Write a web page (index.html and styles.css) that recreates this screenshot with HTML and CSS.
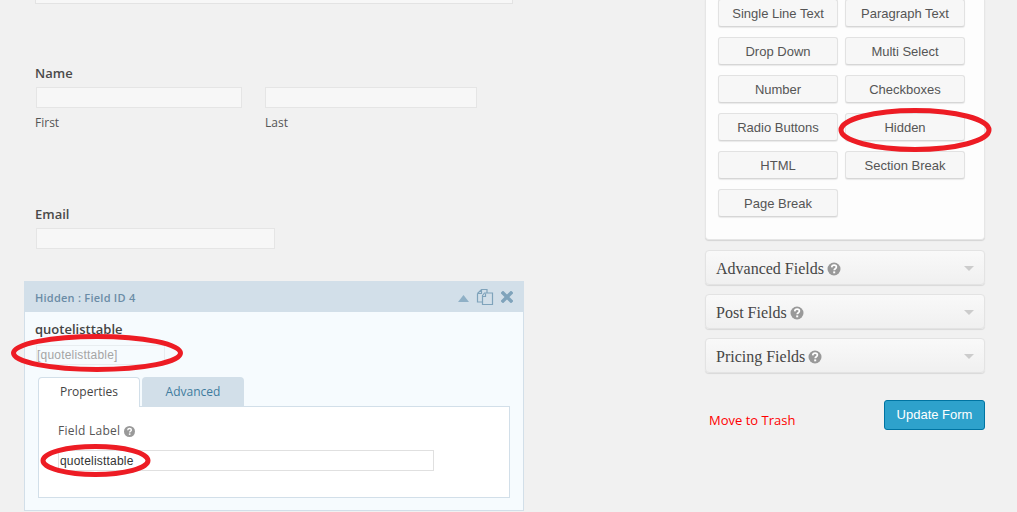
FILE: index.html
```html
<!DOCTYPE html>
<html lang="en">
<head>
<meta charset="utf-8">
<title>Form editor</title>
<link rel="stylesheet" href="styles.css">
</head>
<body>
<main class="page">
  <section class="editor">
    <div class="top-box"></div>
    <div class="field field-name">
      <div class="field-title">Name</div>
      <div class="name-row">
        <div class="name-first"><div class="input input-first"></div><div class="sub">First</div></div>
        <div class="name-last"><div class="input input-last"></div><div class="sub">Last</div></div>
      </div>
    </div>
    <div class="field field-email">
      <div class="field-title">Email</div>
      <div class="input input-email"></div>
    </div>
    <div class="card">
      <div class="card-head">
        <span class="card-type">Hidden : Field ID 4</span>
        <div class="card-tools">
          <svg class="ic-up" width="11" height="7" viewBox="0 0 11 7"><path d="M5.5 0 11 7H0z" fill="#8fb0c6"/></svg>
          <svg class="ic-copy" width="18" height="18" viewBox="0 0 18 18"><path d="M1.500 5.500 5.500 1.500H11V5M1.500 5.500V14H6M1.500 5.500H5.500V1.500" fill="none" stroke="#7fa3bb" stroke-width="1.200"/><path d="M6.500 7.500 8.500 5H16.500V16.500H6.500Z" fill="#d2dfe9" stroke="#7fa3bb" stroke-width="1.200"/><path d="M6.500 8.500H9.500V5.500" fill="none" stroke="#7fa3bb" stroke-width="1.200"/></svg>
          <svg class="ic-x" width="12" height="12" viewBox="0 0 12 12"><path d="M2 2 10 10M10 2 2 10" stroke="#7fa3bb" stroke-width="3.400" stroke-linecap="square"/></svg>
        </div>
      </div>
      <div class="card-body">
        <div class="card-label">quotelisttable</div>
        <div class="shortcode">[quotelisttable]</div>
        <div class="tabs">
          <div class="tab tab-active">Properties</div>
          <div class="tab">Advanced</div>
        </div>
        <div class="tab-panel">
          <div class="prop-label">Field Label
            <svg class="help help-small" width="11" height="11" viewBox="0 0 14 14"><circle cx="7" cy="7" r="7" fill="#999"/><path d="M4.700 5.400C4.800 3.900 5.800 3.200 7.100 3.200 8.500 3.200 9.400 4 9.400 5.100 9.400 6.700 7.200 6.700 7.200 8.300" fill="none" stroke="#fff" stroke-width="1.700"/><rect x="6.200" y="9.400" width="2" height="1.900" fill="#fff"/></svg>
          </div>
          <div class="label-input">quotelisttable</div>
        </div>
      </div>
    </div>
  </section>

  <aside class="sidebar">
    <div class="std-panel">
      <div class="btn-grid">
        <div class="fbtn">Single Line Text</div>
        <div class="fbtn">Paragraph Text</div>
        <div class="fbtn">Drop Down</div>
        <div class="fbtn">Multi Select</div>
        <div class="fbtn">Number</div>
        <div class="fbtn">Checkboxes</div>
        <div class="fbtn">Radio Buttons</div>
        <div class="fbtn">Hidden</div>
        <div class="fbtn">HTML</div>
        <div class="fbtn">Section Break</div>
        <div class="fbtn">Page Break</div>
      </div>
    </div>
    <div class="acc">
      <span class="acc-title">Advanced Fields</span>
      <svg class="help" width="14" height="14" viewBox="0 0 14 14"><circle cx="7" cy="7" r="6.500" fill="#999"/><path d="M4.700 5.400C4.800 3.900 5.800 3.200 7.100 3.200 8.500 3.200 9.400 4 9.400 5.100 9.400 6.700 7.200 6.700 7.200 8.300" fill="none" stroke="#fff" stroke-width="1.700"/><rect x="6.200" y="9.400" width="2" height="1.900" fill="#fff"/></svg>
      <span class="acc-caret"></span>
    </div>
    <div class="acc">
      <span class="acc-title">Post Fields</span>
      <svg class="help" width="14" height="14" viewBox="0 0 14 14"><circle cx="7" cy="7" r="6.500" fill="#999"/><path d="M4.700 5.400C4.800 3.900 5.800 3.200 7.100 3.200 8.500 3.200 9.400 4 9.400 5.100 9.400 6.700 7.200 6.700 7.200 8.300" fill="none" stroke="#fff" stroke-width="1.700"/><rect x="6.200" y="9.400" width="2" height="1.900" fill="#fff"/></svg>
      <span class="acc-caret"></span>
    </div>
    <div class="acc">
      <span class="acc-title">Pricing Fields</span>
      <svg class="help" width="14" height="14" viewBox="0 0 14 14"><circle cx="7" cy="7" r="6.500" fill="#999"/><path d="M4.700 5.400C4.800 3.900 5.800 3.200 7.100 3.200 8.500 3.200 9.400 4 9.400 5.100 9.400 6.700 7.200 6.700 7.200 8.300" fill="none" stroke="#fff" stroke-width="1.700"/><rect x="6.200" y="9.400" width="2" height="1.900" fill="#fff"/></svg>
      <span class="acc-caret"></span>
    </div>
    <div class="actions">
      <a class="trash">Move to Trash</a>
      <div class="update">Update Form</div>
    </div>
  </aside>

  <svg class="marks" width="1017" height="512" viewBox="0 0 1017 512">
    <ellipse cx="915" cy="130" rx="74" ry="19.500"/>
    <ellipse cx="97" cy="353" rx="83.500" ry="16.500"/>
    <ellipse cx="95.500" cy="460.500" rx="52.500" ry="14"/>
  </svg>
</main>
</body>
</html>
```
FILE: styles.css
```css
* { box-sizing: border-box; }
html, body { margin: 0; padding: 0; }
body {
  background: #f1f1f1;
  font-family: "Open Sans", sans-serif;
  color: #444;
  overflow: hidden;
}
.page {
  position: relative;
  width: 1017px;
  height: 512px;
  display: flex;
  overflow: hidden;
}
.editor {
  width: 705px;
  padding-left: 24px;
}
.top-box {
  width: 478px;
  height: 4px;
  margin-left: 11px;
  background: #f7f7f7;
  border: 1px solid #e3e3e3;
  border-top: 0;
}
.field { margin-left: 11px; }
.field-name { margin-top: 59px; }
.field-email { margin-top: 72px; }
.field-title {
  font-size: 13px;
  line-height: 20px;
  font-weight: 600;
  color: #4a4a4a;
}
.name-row {
  display: flex;
  margin-top: 4px;
}
.input {
  height: 21px;
  margin-left: 1px;
  background: #f7f7f7;
  border: 1px solid #e5e5e5;
}
.input-first { width: 206px; }
.input-last { width: 212px; margin-left: 0; }
.input-email { width: 239px; margin-top: 4px; }
.name-first { width: 230px; }
.sub {
  font-size: 12px;
  line-height: 18px;
  margin-top: 6px;
  color: #555;
}
.card {
  width: 500px;
  margin-top: 32px;
  border: 1px solid #d2dfe9;
  background: #f6fbfe;
  height: 230px;
}
.card-head {
  height: 30px;
  background: #d2dfe9;
  display: flex;
  align-items: center;
  justify-content: space-between;
  padding: 0 10px;
}
.card-type {
  font-size: 11px;
  font-weight: 600;
  letter-spacing: 0.25px;
  color: #6a8ca6;
}
.card-tools {
  display: flex;
  align-items: center;
}
.ic-up { margin-right: 7px; margin-top: 2px; }
.ic-copy { margin-right: 7px; }
.card-body { padding: 8px 13px 0 10px; }
.card-label {
  font-size: 13px;
  line-height: 18px;
  font-weight: 600;
  color: #444;
}
.shortcode {
  width: 129px;
  height: 20px;
  margin: 7px 0 0 1px;
  font-family: "Liberation Sans", sans-serif;
  font-size: 12px;
  letter-spacing: 0.2px;
  line-height: 18px;
  color: #a5a5a5;
  border: 1px solid #e8edf0;
  padding-left: 0;
}
.tabs {
  display: flex;
  gap: 2px;
  margin: 12px 0 0 3px;
  position: relative;
  z-index: 1;
}
.tab {
  width: 102px;
  height: 29px;
  border-radius: 4px 4px 0 0;
  background: #d2dfe9;
  text-align: center;
  font-size: 12px;
  line-height: 29px;
  color: #3f7c9e;
}
.tab-active {
  background: #fff;
  border: 1px solid #d2dfe9;
  border-bottom: 0;
  color: #444;
  height: 30px;
  line-height: 28px;
}
.tab-panel {
  width: 472px;
  height: 92px;
  margin: -1px 0 0 3px;
  background: #fff;
  border: 1px solid #d2dfe9;
  padding: 15px 19px 0;
}
.prop-label {
  font-size: 12px;
  letter-spacing: 0.25px;
  line-height: 18px;
  color: #555;
  display: flex;
  align-items: center;
  gap: 4px;
}
.label-input {
  width: 376px;
  height: 21px;
  margin-top: 10px;
  background: #fff;
  border: 1px solid #e0e0e0;
  padding-left: 1px;
  font-family: "Liberation Sans", sans-serif;
  font-size: 12px;
  letter-spacing: 0.2px;
  line-height: 20px;
  color: #333;
}
.sidebar { width: 280px; }
.std-panel {
  height: 241px;
  background: #fdfdfd;
  border-radius: 0 0 4px 4px;
  box-shadow: 0 1px 1px rgba(0, 0, 0, 0.12);
  border: 1px solid #e6e6e6;
  border-top: 0;
  padding: 0 0 0 12px;
}
.btn-grid {
  display: grid;
  grid-template-columns: 120px 120px;
  grid-auto-rows: 28px;
  column-gap: 7px;
  row-gap: 10px;
  margin-top: -1px;
}
.fbtn {
  background: #f7f7f7;
  border: 1px solid #e2e2e2;
  border-bottom-color: #d6d6d6;
  border-radius: 3px;
  box-shadow: 0 1px 1px rgba(0, 0, 0, 0.08);
  text-align: center;
  font-family: "Liberation Sans", sans-serif;
  font-size: 13px;
  line-height: 27px;
  color: #555;
}
.acc {
  height: 35px;
  margin-top: 9px;
  display: flex;
  align-items: center;
  gap: 3px;
  padding: 2px 10px 0;
  border: 1px solid #e3e3e3;
  border-radius: 4px;
  background: linear-gradient(#f9f9f9, #f0f0f0);
  box-shadow: 0 1px 1px rgba(0, 0, 0, 0.1);
}
.std-panel + .acc { margin-top: 10px; }
.acc-title {
  font-family: "Liberation Serif", serif;
  font-size: 16px;
  color: #464646;
}
.acc-caret {
  margin-left: auto;
  width: 0;
  height: 0;
  border-left: 5px solid transparent;
  border-right: 5px solid transparent;
  border-top: 5px solid #ccc;
}
.actions {
  display: flex;
  justify-content: space-between;
  align-items: flex-start;
  margin-top: 27px;
  padding-left: 4px;
}
.trash {
  font-size: 13px;
  line-height: 18px;
  margin-top: 11px;
  color: #f00;
}
.update {
  width: 101px;
  height: 30px;
  background: #2ea2cc;
  border: 1px solid #0074a2;
  border-radius: 3px;
  text-align: center;
  font-family: "Liberation Sans", sans-serif;
  font-size: 13px;
  line-height: 28px;
  color: #fff;
}
.marks {
  position: absolute;
  left: 0;
  top: 0;
  pointer-events: none;
}
.marks ellipse {
  fill: none;
  stroke: #ed1c24;
  stroke-width: 5;
}
```
